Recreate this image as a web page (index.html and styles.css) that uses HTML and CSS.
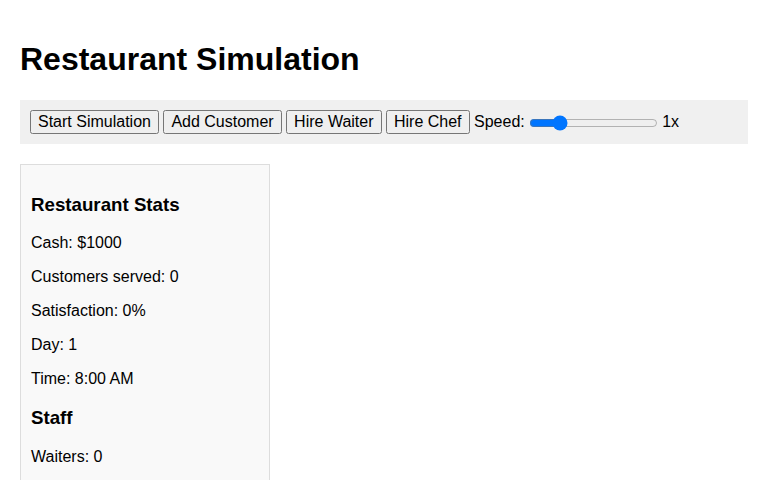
FILE: index.html
```html
<!DOCTYPE html>
<html lang="en">
<head>
  <meta charset="UTF-8" />
  <meta name="viewport" content="width=device-width, initial-scale=1.0" />
  <title>Restaurant Simulation</title>
  <link rel="stylesheet" href="styles.css">
</head>
<body>
  <h1>Restaurant Simulation</h1>
  <div class="controls">
    <button id="startBtn">Start Simulation</button>
    <button id="addCustomerBtn">Add Customer</button>
    <button id="hireWaiterBtn">Hire Waiter</button>
    <button id="hireChefBtn">Hire Chef</button>
    <label for="speed">Speed:</label>
    <input type="range" id="speed" min="0" max="5" value="1" /><span id="speedValue">1x</span>
  </div>
  <div class="main">
    <div class="stats-panel">
      <h3>Restaurant Stats</h3>
      <p>Cash: $<span id="cash">1000</span></p>
      <p>Customers served: <span id="served">0</span></p>
      <p>Satisfaction: <span id="satisfaction">0</span>%</p>
      <p>Day: <span id="day">1</span></p>
      <p>Time: <span id="time">8:00 AM</span></p>
      <h3>Staff</h3>
      <p>Waiters: <span id="waiters">0</span></p>
    </div>
    <div class="restaurant" id="restaurant"></div>
  </div>
</body>
</html>
```

FILE: styles.css
```css
body {
  margin: 0;
  padding: 20px;
  font-family: "Liberation Sans", Arial, sans-serif;
  color: #000;
}

.controls {
  background: #f0f0f0;
  padding: 10px;
  margin-bottom: 20px;
}

.controls button {
  font-family: "Liberation Sans", Arial, sans-serif;
  font-size: 16px;
  padding: 1px 6px;
}

.controls input[type="range"] {
  vertical-align: middle;
  margin: 0 4px 0 0;
}

.main {
  display: flex;
  gap: 20px;
}

.stats-panel {
  box-sizing: border-box;
  width: 250px;
  padding: 10px;
  background: #f9f9f9;
  border: 1px solid #ddd;
}

.restaurant {
  flex: 1;
}
```
